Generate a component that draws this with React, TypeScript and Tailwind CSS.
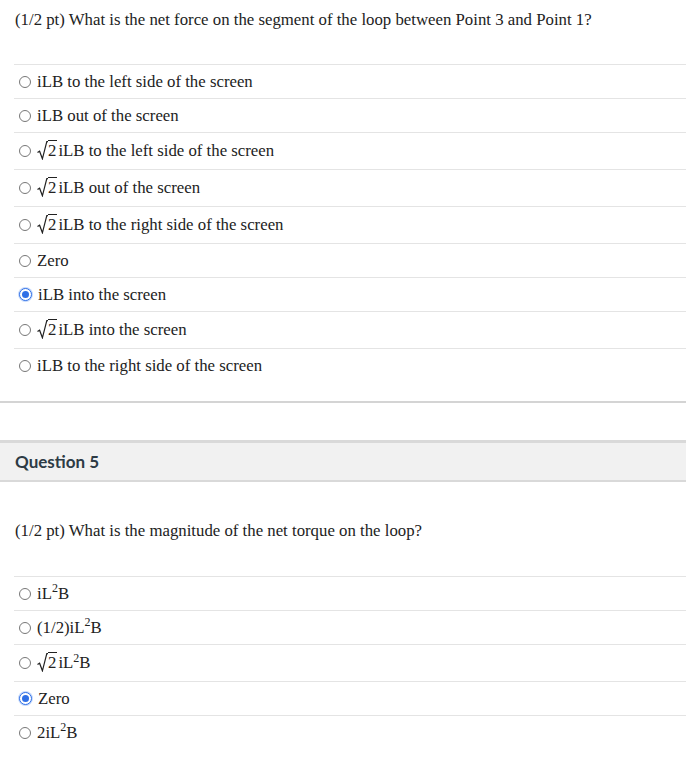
import React from 'react';

type Opt = { text: React.ReactNode; sqrt?: boolean; checked?: boolean };

const Sup = ({ children }: { children: React.ReactNode }) => (
	<sup className="text-[12px] top-[-0.55em]">{children}</sup>
);

// radical sign drawn, overline carried by the border of the "2"
const Root2 = () => (
	<span className="mr-[1px]">
		<svg width="11" height="19" viewBox="0 0 11 19" className="inline align-[-4px]">
			<path d="M0.5 11.5 L2.6 10.2 L5.4 17.8 L9.8 0.6 L11 0.6" fill="none" stroke="#222" strokeWidth="1.2" />
		</svg>
		<span className="border-t-[1.2px] border-[#222] pr-[1px]">2</span>
	</span>
);

const q4: Opt[] = [
	{ text: 'iLB to the left side of the screen' },
	{ text: 'iLB out of the screen' },
	{ text: 'iLB to the left side of the screen', sqrt: true },
	{ text: 'iLB out of the screen', sqrt: true },
	{ text: 'iLB to the right side of the screen', sqrt: true },
	{ text: 'Zero' },
	{ text: 'iLB into the screen', checked: true },
	{ text: 'iLB into the screen', sqrt: true },
	{ text: 'iLB to the right side of the screen' },
];

const q5: Opt[] = [
	{ text: <>iL<Sup>2</Sup>B</> },
	{ text: <>(1/2)iL<Sup>2</Sup>B</> },
	{ text: <>iL<Sup>2</Sup>B</>, sqrt: true },
	{ text: 'Zero', checked: true },
	{ text: <>2iL<Sup>2</Sup>B</> },
];

function Radio({ checked }: { checked?: boolean }) {
	if (checked)
		return (
			<span className="w-[13px] h-[13px] rounded-full border-[1.5px] border-[#2f6fe6] flex items-center justify-center bg-white shadow-[0_0_0_1px_#c6dafc]">
				<span className="w-[7px] h-[7px] rounded-full bg-[#2f6fe6]" />
			</span>
		);
	return <span className="w-3 h-3 rounded-full border border-[#777] bg-white" />;
}

function Options({ items }: { items: Opt[] }) {
	return (
		<div className="ml-[14px]">
			{items.map((o, i) => (
				<div
					key={i}
					className={`flex items-center border-t border-[#e4e4e4] pl-[5px] gap-[6px] ${o.sqrt ? 'h-[37px]' : 'h-[34px]'}`}
				>
					<Radio checked={o.checked} />
					<span className="text-[16.8px] text-[#222] whitespace-pre">
						{o.sqrt && <Root2 />}
						{o.text}
					</span>
				</div>
			))}
		</div>
	);
}

export default function App() {
	return (
		<div className="w-[686px] h-[761px] bg-white overflow-hidden font-['Liberation_Serif',serif] text-[#222]">
			<p className="pl-[15px] pt-[9px] text-[16.8px] leading-[22px]">
				(1/2 pt) What is the net force on the segment of the loop between Point 3 and Point 1?
			</p>
			<div className="mt-[33px]">
				<Options items={q4} />
			</div>
			<div className="mt-[19px] border-t-2 border-[#d4d4d4]" />
			<div className="mt-[37px] h-[42px] bg-[#f1f1f1] border-t-[3px] border-b-2 border-[#d9d9d9] flex items-center pl-[15px]">
				<span className="font-['Lato',sans-serif] font-bold text-[17px] text-[#2d3b45]">Question 5</span>
			</div>
			<p className="pl-[15px] mt-[38px] text-[16.8px] leading-[22px]">
				(1/2 pt) What is the magnitude of the net torque on the loop?
			</p>
			<div className="mt-[34px]">
				<Options items={q5} />
			</div>
		</div>
	);
}
